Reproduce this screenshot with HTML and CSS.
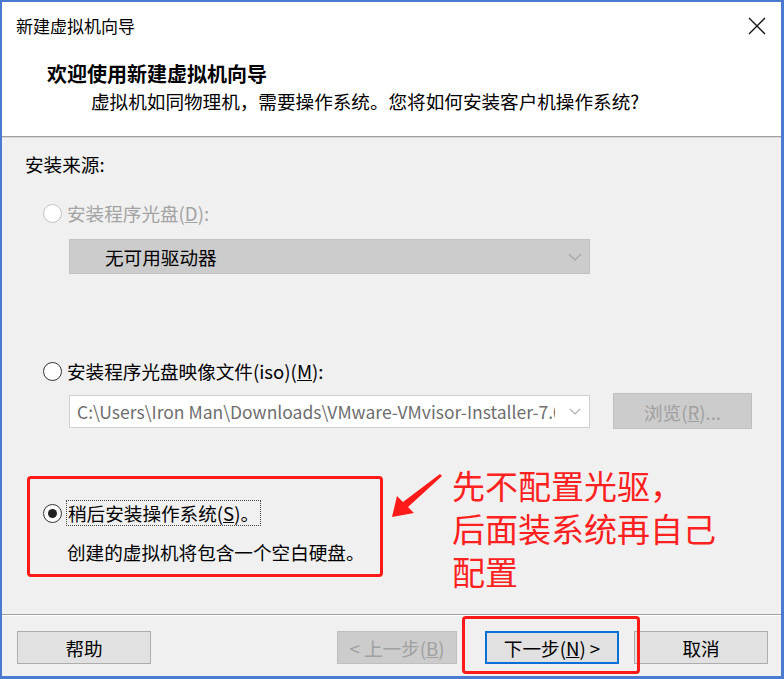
FILE: index.html
```html
<!DOCTYPE html>
<html lang="zh-CN">
<head>
<meta charset="utf-8">
<title>新建虚拟机向导</title>
<link rel="stylesheet" href="styles.css">
</head>
<body>
<div class="window">
  <div class="header">
    <div class="titlebar">
      <span class="title">新建虚拟机向导</span>
      <svg class="close" width="18" height="18" viewBox="0 0 18 18"><path d="M1 1 L17 17 M17 1 L1 17" stroke="#111" stroke-width="1.3" fill="none"/></svg>
    </div>
    <div class="heading">欢迎使用新建虚拟机向导</div>
    <div class="subtitle">虚拟机如同物理机，需要操作系统。您将如何安装客户机操作系统?</div>
  </div>
  <div class="body">
    <div class="section-label">安装来源:</div>
    <div class="option disabled">
      <span class="radio"></span>
      <span class="label">安装程序光盘(<u>D</u>):</span>
    </div>
    <div class="dropdown">
      <span>无可用驱动器</span>
      <svg class="chev" width="14" height="8" viewBox="0 0 14 8"><path d="M1 1 L7 7 L13 1" stroke="#a8a8a8" stroke-width="1.3" fill="none"/></svg>
    </div>
    <div class="option option-iso">
      <span class="radio"></span>
      <span class="label">安装程序光盘映像文件(iso)(<u>M</u>):</span>
    </div>
    <div class="iso-row">
      <div class="combo">
        <span class="combo-text">C:\Users\Iron Man\Downloads\VMware-VMvisor-Installer-7.0.0</span>
        <svg class="chev" width="12" height="7" viewBox="0 0 12 7"><path d="M1 1 L6 6 L11 1" stroke="#b0b0b0" stroke-width="1.2" fill="none"/></svg>
      </div>
      <div class="btn btn-disabled browse">浏览(<u>R</u>)...</div>
    </div>
    <div class="later-box">
      <div class="option">
        <span class="radio checked"></span>
        <span class="label focus">稍后安装操作系统(<u>S</u>)。</span>
      </div>
      <div class="desc">创建的虚拟机将包含一个空白硬盘。</div>
    </div>
  </div>
  <div class="footer">
    <div class="btn help">帮助</div>
    <div class="spacer"></div>
    <div class="btn btn-disabled back">&lt; 上一步(<u>B</u>)</div>
    <div class="btn next">下一步(<u>N</u>) &gt;</div>
    <div class="btn cancel">取消</div>
  </div>

  <svg class="arrow" width="60" height="46" viewBox="0 0 60 46">
    <path d="M2 44 L7 23 L13 29 L50 1 L52 3 L18 34 L24 40 Z" fill="#ff1a1a"/>
  </svg>
  <div class="note">
    <div class="note-line">先不配置光驱，</div>
    <div class="note-line">后面装系统再自己</div>
    <div class="note-line">配置</div>
  </div>
  <div class="next-mark"></div>
</div>
</body>
</html>
```
FILE: styles.css
```css
html, body {
  margin: 0;
  padding: 0;
}
body {
  font-family: "Noto Sans CJK SC", "Noto Sans", sans-serif;
  color: #000;
  background: #f0f0f0;
}
.window {
  position: relative;
  width: 784px;
  height: 679px;
  box-sizing: border-box;
  border-style: solid;
  border-color: #4a7bd0;
  border-width: 2px 3px 3px 2px;
  display: flex;
  flex-direction: column;
  background: #f0f0f0;
  overflow: hidden;
}
.header {
  background: #fff;
  height: 134px;
  border-bottom: 1px solid #a0a0a0;
  box-shadow: 0 1px 0 #d8d8d8;
  flex: none;
}
.titlebar {
  height: 48px;
  display: flex;
  align-items: center;
  justify-content: space-between;
  padding: 0 15px 0 14px;
}
.title {
  font-size: 17px;
  line-height: 20px;
}
.close {
  display: block;
}
.heading {
  margin-top: 11px;
  padding-left: 45px;
  font-size: 20px;
  font-weight: bold;
  line-height: 26px;
}
.subtitle {
  padding-left: 89px;
  margin-top: 1px;
  font-size: 18.6px;
  line-height: 26px;
}
.body {
  flex: 1;
  padding: 14px 0 0 23px;
  font-size: 18.6px;
  border-bottom: 1px solid #a0a0a0;
  box-shadow: 0 1px 0 #fff;
}
.section-label {
  line-height: 26px;
}
.option {
  display: flex;
  align-items: center;
  height: 26px;
  padding-left: 18px;
  margin-top: 23px;
}
.option .label {
  line-height: 24px;
  margin-left: 5px;
  white-space: nowrap;
}
.radio {
  width: 17px;
  height: 17px;
  border: 1px solid #333;
  border-radius: 50%;
  background: #fff;
  box-sizing: content-box;
  position: relative;
  flex: none;
}
.radio.checked::after {
  content: "";
  position: absolute;
  left: 4px;
  top: 4px;
  width: 9px;
  height: 9px;
  border-radius: 50%;
  background: #222;
}
.option.disabled .radio {
  border-color: #c2c2c2;
}
.option.disabled .label {
  color: #a3a3a3;
}
.dropdown {
  margin: 13px 0 0 44px;
  width: 521px;
  height: 35px;
  box-sizing: border-box;
  background: #cccccc;
  border: 1px solid #c2c2c2;
  display: flex;
  align-items: center;
  justify-content: space-between;
  padding: 0 7px 0 35px;
}
.option-iso {
  margin-top: 84px;
}
.iso-row {
  display: flex;
  align-items: flex-start;
  margin-top: 9px;
  height: 36px;
}
.combo {
  margin: 2px 0 0 44px;
  width: 521px;
  height: 33px;
  box-sizing: border-box;
  background: #fff;
  border: 1px solid #cfcfcf;
  display: flex;
  align-items: center;
  padding: 0 8px 0 7px;
}
.combo-text {
  flex: 1;
  overflow: hidden;
  white-space: nowrap;
  color: #6e6e6e;
  font-size: 17.5px;
  margin-right: 14px;
}
.btn {
  height: 33px;
  box-sizing: border-box;
  background: #e1e1e1;
  border: 1px solid #adadad;
  display: flex;
  align-items: center;
  justify-content: center;
  font-size: 18.6px;
  white-space: nowrap;
}
.btn-disabled {
  background: #cccccc;
  border-color: #bfbfbf;
  color: #a0a0a0;
}
.browse {
  margin-left: 23px;
  width: 139px;
  height: 36px;
}
.later-box {
  margin: 47px 0 0 2px;
  width: 356px;
  height: 101px;
  box-sizing: border-box;
  border: 3px solid #ff1a1a;
  border-radius: 4px;
  padding-top: 21px;
}
.later-box .option {
  margin-top: 0;
  padding-left: 13px;
}
.focus {
  outline: 1px dotted #444;
  outline-offset: 0;
  padding: 0 1px;
}
.desc {
  margin-top: 13px;
  padding-left: 37px;
  line-height: 26px;
  white-space: nowrap;
}
.footer {
  flex: none;
  height: 61px;
  display: flex;
  align-items: flex-start;
  padding: 16px 13px 0 15px;
  box-sizing: border-box;
}
.spacer {
  flex: 1;
}
.help {
  width: 134px;
}
.back {
  width: 120px;
}
.next {
  width: 134px;
  margin-left: 28px;
  border: 2px solid #0a6fd6;
}
.cancel {
  width: 134px;
  margin-left: 15px;
}
.arrow {
  position: absolute;
  left: 388px;
  top: 471px;
}
.note {
  position: absolute;
  left: 450px;
  top: 462px;
  font-size: 33px;
  color: #ff2020;
  white-space: nowrap;
}
.note-line {
  height: 43px;
  line-height: 43px;
}
.next-mark {
  position: absolute;
  left: 460px;
  top: 614px;
  width: 178px;
  height: 58px;
  box-sizing: border-box;
  border: 3px solid #ff1a1a;
  border-radius: 4px;
}
```
